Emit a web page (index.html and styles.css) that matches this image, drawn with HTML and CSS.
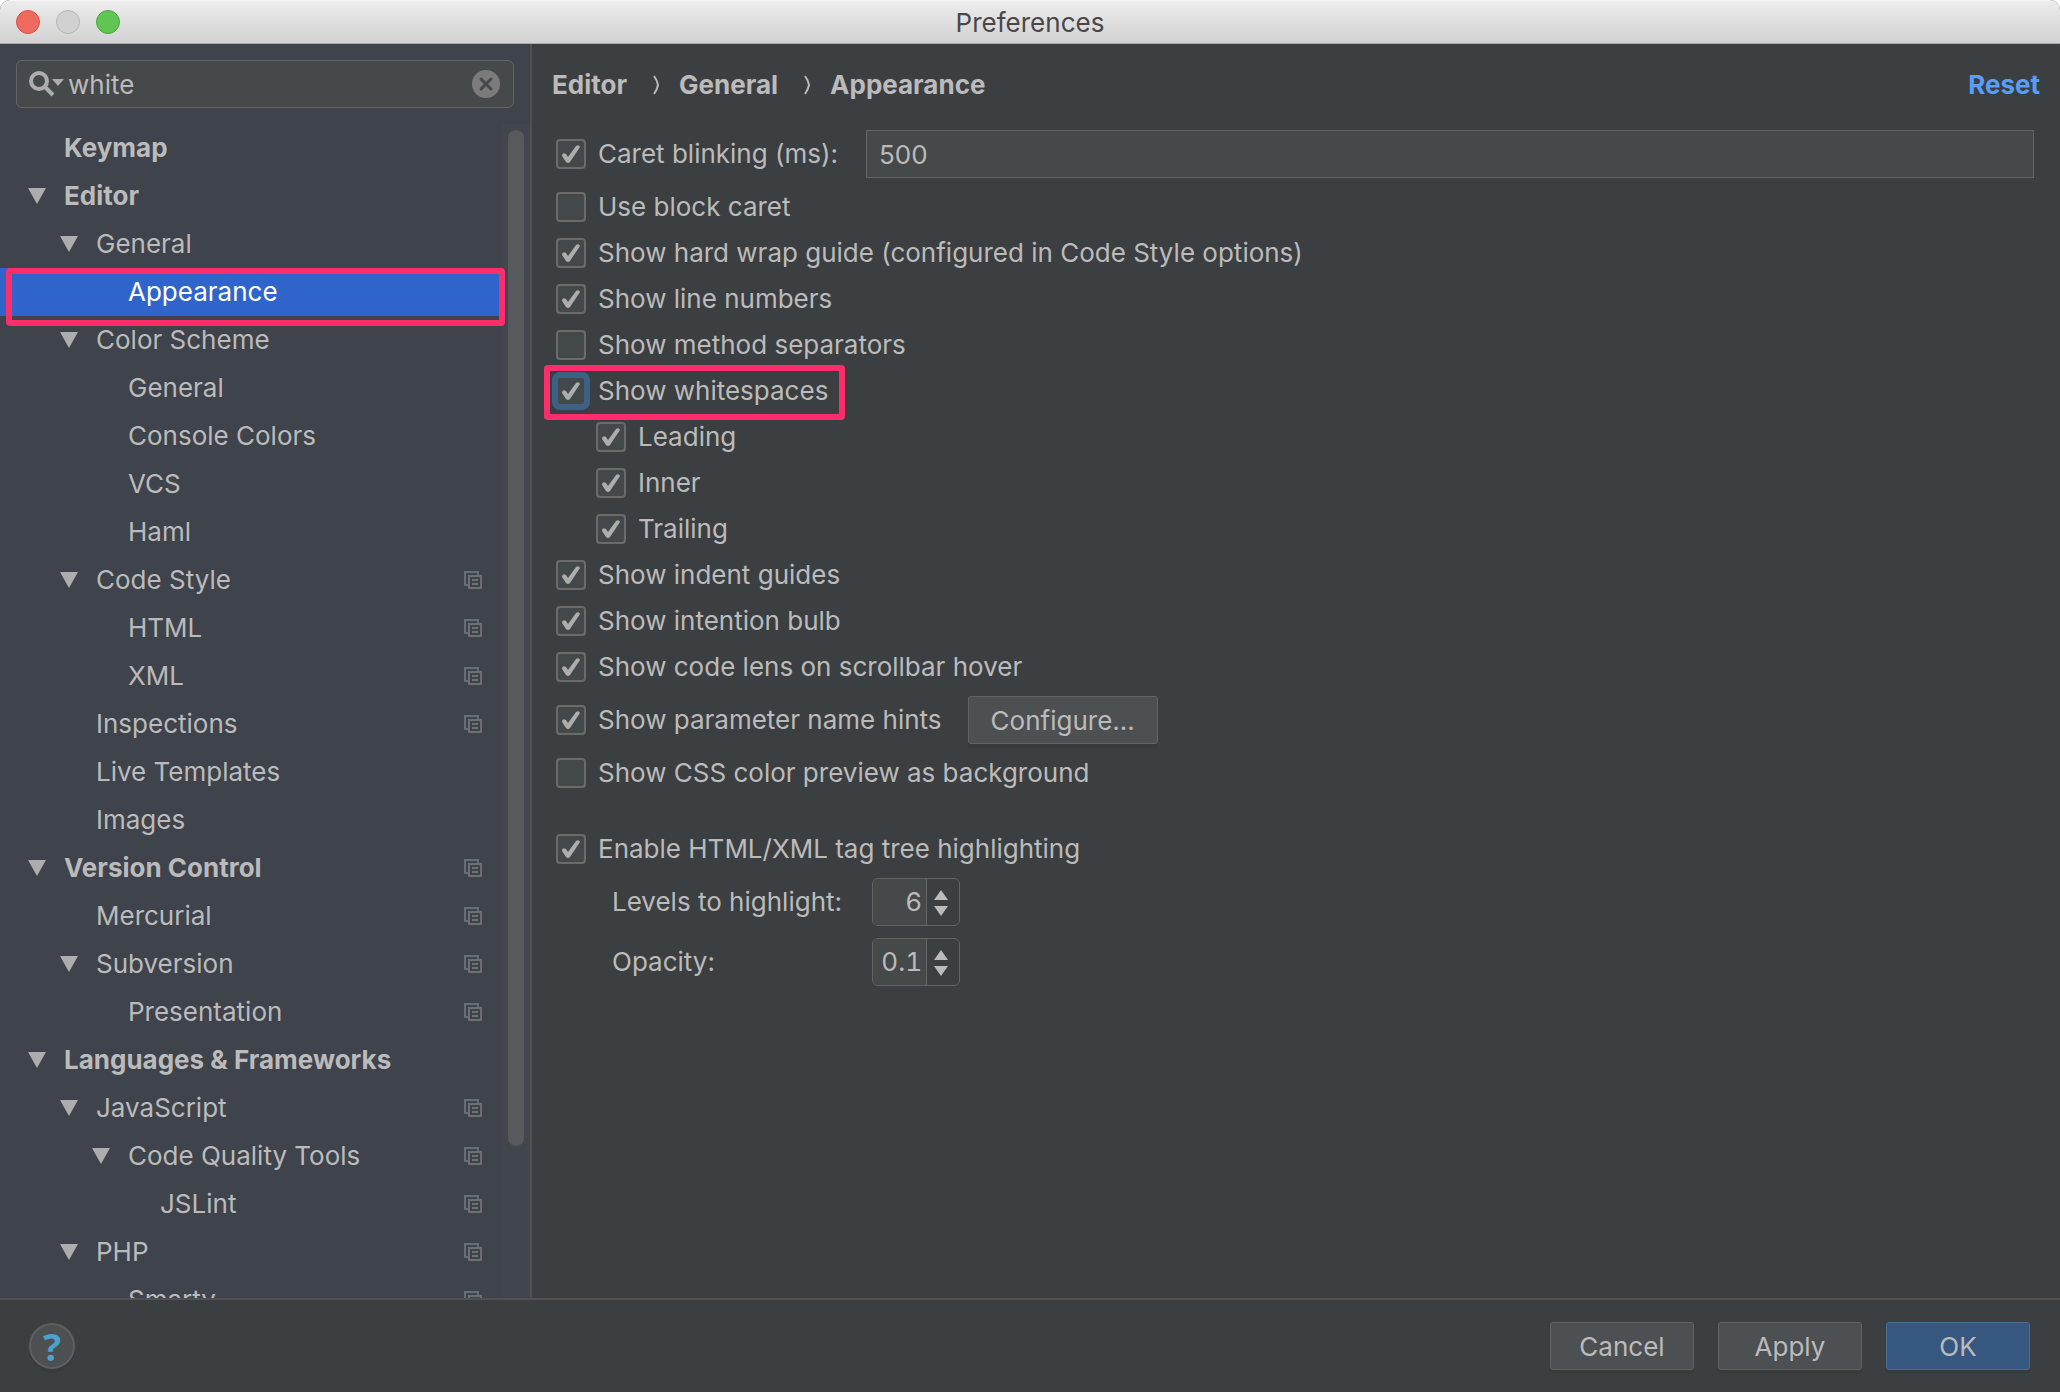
FILE: index.html
```html
<!DOCTYPE html>
<html lang="en">
<head>
  <meta charset="UTF-8" />
  <meta name="viewport" content="width=device-width, initial-scale=1.0" />
  <title>Preferences</title>
  <link rel="stylesheet" href="styles.css">
</head>
<body>
  <svg class="sprite" aria-hidden="true">
    <symbol id="arrow" viewBox="0 0 18 16"><path d="M0 0h18L9 16z" fill="#adadad"/></symbol>
    <symbol id="copy" viewBox="0 0 18 18">
      <path d="M14 4V1H1v13h3" fill="none" stroke="#60717c" stroke-width="2"/>
      <path d="M5 5h12v12H5zM8 9h6M8 13h6" fill="none" stroke="#6f6f6f" stroke-width="2"/>
    </symbol>
    <symbol id="up" viewBox="0 0 14 10"><path d="M0 10h14L7 0z" fill="#bbb"/></symbol>
    <symbol id="down" viewBox="0 0 14 10"><path d="M0 0h14L7 10z" fill="#bbb"/></symbol>
    <symbol id="chevron" viewBox="0 0 8 20"><path d="M1 1q3 4 4 9-1 5-4 9" fill="none" stroke="#bbb" stroke-width="2"/></symbol>
  </svg>

  <div class="window">
    <header class="titlebar">
      <div class="lights">
        <button class="light red" aria-label="Close"></button>
        <button class="light gray" aria-label="Minimize"></button>
        <button class="light green" aria-label="Zoom"></button>
      </div>
      <h1>Preferences</h1>
    </header>

    <div class="main">
      <aside class="sidebar">
        <div class="search">
          <svg class="search-icon" viewBox="0 0 36 28" aria-hidden="true">
            <circle cx="10" cy="11" r="8" fill="none" stroke="#adadad" stroke-width="4"/>
            <path d="M15 16l9 9" stroke="#adadad" stroke-width="4"/>
            <path d="M23 9h12l-6 7z" fill="#adadad"/>
          </svg>
          <input type="text" value="white" aria-label="Search settings">
          <button class="clear" aria-label="Clear search">
            <svg viewBox="0 0 28 28"><circle cx="14" cy="14" r="14" fill="#7b7b7b"/><path d="M9 9l10 10M19 9L9 19" stroke="#45494a" stroke-width="3" stroke-linecap="round"/></svg>
          </button>
        </div>

        <div class="tree-wrap">
          <ul class="tree">
            <li class="row top"><span>Keymap</span></li>
            <li class="row top"><svg class="arrow"><use href="#arrow"/></svg><span>Editor</span></li>
            <li class="row l1"><svg class="arrow"><use href="#arrow"/></svg><span>General</span></li>
            <li class="row l2 selected"><span>Appearance</span></li>
            <li class="row l1"><svg class="arrow"><use href="#arrow"/></svg><span>Color Scheme</span></li>
            <li class="row l2"><span>General</span></li>
            <li class="row l2"><span>Console Colors</span></li>
            <li class="row l2"><span>VCS</span></li>
            <li class="row l2"><span>Haml</span></li>
            <li class="row l1"><svg class="arrow"><use href="#arrow"/></svg><span>Code Style</span><svg class="copy"><use href="#copy"/></svg></li>
            <li class="row l2"><span>HTML</span><svg class="copy"><use href="#copy"/></svg></li>
            <li class="row l2"><span>XML</span><svg class="copy"><use href="#copy"/></svg></li>
            <li class="row l1"><span>Inspections</span><svg class="copy"><use href="#copy"/></svg></li>
            <li class="row l1"><span>Live Templates</span></li>
            <li class="row l1"><span>Images</span></li>
            <li class="row top"><svg class="arrow"><use href="#arrow"/></svg><span>Version Control</span><svg class="copy"><use href="#copy"/></svg></li>
            <li class="row l1"><span>Mercurial</span><svg class="copy"><use href="#copy"/></svg></li>
            <li class="row l1"><svg class="arrow"><use href="#arrow"/></svg><span>Subversion</span><svg class="copy"><use href="#copy"/></svg></li>
            <li class="row l2"><span>Presentation</span><svg class="copy"><use href="#copy"/></svg></li>
            <li class="row top"><svg class="arrow"><use href="#arrow"/></svg><span>Languages &amp; Frameworks</span></li>
            <li class="row l1"><svg class="arrow"><use href="#arrow"/></svg><span>JavaScript</span><svg class="copy"><use href="#copy"/></svg></li>
            <li class="row l2"><svg class="arrow"><use href="#arrow"/></svg><span>Code Quality Tools</span><svg class="copy"><use href="#copy"/></svg></li>
            <li class="row l3"><span>JSLint</span><svg class="copy"><use href="#copy"/></svg></li>
            <li class="row l1"><svg class="arrow"><use href="#arrow"/></svg><span>PHP</span><svg class="copy"><use href="#copy"/></svg></li>
            <li class="row l2"><span>Smarty</span><svg class="copy"><use href="#copy"/></svg></li>
          </ul>
          <div class="scrollbar"><div class="thumb"></div></div>
        </div>
      </aside>

      <main class="content">
        <div class="crumbs">
          <span>Editor</span>
          <svg class="chevron"><use href="#chevron"/></svg>
          <span>General</span>
          <svg class="chevron"><use href="#chevron"/></svg>
          <span>Appearance</span>
          <a class="reset" href="#">Reset</a>
        </div>

        <form class="options">
          <div class="field">
            <label class="check"><input type="checkbox" checked>Caret blinking (ms):</label>
            <input class="text" type="text" value="500" aria-label="Caret blinking (ms)">
          </div>
          <label class="check"><input type="checkbox">Use block caret</label>
          <label class="check"><input type="checkbox" checked>Show hard wrap guide (configured in Code Style options)</label>
          <label class="check"><input type="checkbox" checked>Show line numbers</label>
          <label class="check"><input type="checkbox">Show method separators</label>
          <label class="check focused"><input type="checkbox" checked>Show whitespaces</label>
          <label class="check sub"><input type="checkbox" checked>Leading</label>
          <label class="check sub"><input type="checkbox" checked>Inner</label>
          <label class="check sub"><input type="checkbox" checked>Trailing</label>
          <label class="check"><input type="checkbox" checked>Show indent guides</label>
          <label class="check"><input type="checkbox" checked>Show intention bulb</label>
          <label class="check"><input type="checkbox" checked>Show code lens on scrollbar hover</label>
          <div class="field hints">
            <label class="check"><input type="checkbox" checked>Show parameter name hints</label>
            <button type="button" class="btn">Configure...</button>
          </div>
          <label class="check"><input type="checkbox">Show CSS color preview as background</label>
          <label class="check tags"><input type="checkbox" checked>Enable HTML/XML tag tree highlighting</label>
          <div class="levels">
            <label for="levels">Levels to highlight:</label>
            <div class="spinner">
              <input id="levels" type="number" value="6">
              <div class="steps">
                <button type="button" aria-label="More levels"><svg><use href="#up"/></svg></button>
                <button type="button" aria-label="Fewer levels"><svg><use href="#down"/></svg></button>
              </div>
            </div>
            <label for="opacity">Opacity:</label>
            <div class="spinner">
              <input id="opacity" type="number" step="0.1" value="0.1">
              <div class="steps">
                <button type="button" aria-label="More opacity"><svg><use href="#up"/></svg></button>
                <button type="button" aria-label="Less opacity"><svg><use href="#down"/></svg></button>
              </div>
            </div>
          </div>
        </form>
      </main>
    </div>

    <footer class="footer">
      <button class="help" aria-label="Help">?</button>
      <button class="btn">Cancel</button>
      <button class="btn">Apply</button>
      <button class="btn primary">OK</button>
    </footer>
  </div>
</body>
</html>
```
FILE: styles.css
```css
* {
  box-sizing: border-box;
}
body {
  margin: 0;
  background: #fff;
  color: #bbb;
  font-family: Inter, Roboto, sans-serif;
  font-size: 26px;
  line-height: 32px;
}
button, input {
  font: inherit;
  color: inherit;
  margin: 0;
  padding: 0;
  border: none;
  background: none;
}
input {
  min-width: 0;
  outline: none;
}
svg {
  display: block;
  flex: none;
}
.sprite {
  position: absolute;
  width: 0;
  height: 0;
}
.window {
  display: flex;
  flex-direction: column;
  height: 100vh;
  overflow: hidden;
  border-radius: 10px 10px 0 0;
  background: #3c3f41;
}

/* title bar */
.titlebar {
  display: grid;
  grid-template-columns: 1fr auto 1fr;
  align-items: center;
  flex: none;
  height: 44px;
  padding: 0 16px;
  background: linear-gradient(#ececec, #d2d2d2);
  border-top: 1px solid #f6f6f6;
  border-bottom: 1px solid #a9abab;
}
.titlebar h1 {
  margin: 0;
  padding-top: 2px;
  color: #484848;
  font-size: 26px;
  font-weight: 400;
}
.lights {
  display: flex;
  gap: 16px;
}
.light {
  width: 24px;
  height: 24px;
  border-radius: 50%;
  border: 1px solid #b4b4b4;
  background: #d1d1d1;
}
.light.red {
  background: #ee6a5e;
  border-color: #d9534b;
}
.light.green {
  background: #61c554;
  border-color: #4aa73c;
}

.main {
  display: flex;
  flex: 1;
  min-height: 0;
}

/* sidebar */
.sidebar {
  display: flex;
  flex-direction: column;
  flex: none;
  width: 532px;
  padding-top: 16px;
  background: #3f434c;
  border-right: 2px solid #515151;
}
.search {
  display: flex;
  align-items: center;
  flex: none;
  height: 48px;
  margin: 0 16px 16px;
  padding: 0 13px 0 12px;
  background: #45494a;
  border: 1px solid #646464;
  border-radius: 6px;
}
.search-icon {
  width: 36px;
  height: 28px;
  margin-right: 3px;
}
.search input {
  flex: 1;
  padding-top: 2px;
}
.clear, .clear svg {
  width: 28px;
  height: 28px;
}
.tree-wrap {
  display: flex;
  flex: 1;
  min-height: 0;
}
.tree {
  flex: 1;
  margin: 0;
  padding: 0;
  list-style: none;
  overflow-x: visible;
  overflow-y: clip;
}
.row {
  position: relative;
  display: flex;
  align-items: center;
  height: 48px;
  padding: 0 20px 0 64px;
}
.row.top {
  font-weight: 700;
}
.row.l1 {
  padding-left: 96px;
}
.row.l2 {
  padding-left: 128px;
}
.row.l3 {
  padding-left: 160px;
}
.row.selected {
  z-index: 1;
  color: #fff;
  background: #2f65ca;
}
.row.selected::after {
  content: "";
  position: absolute;
  inset: 0 -3px -10px 6px;
  border: 6px solid #ff2d6b;
  border-radius: 4px;
}
.arrow {
  width: 18px;
  height: 16px;
  margin-left: -36px;
  margin-right: 18px;
}
.copy {
  width: 18px;
  height: 18px;
  margin-left: auto;
}
.scrollbar {
  width: 28px;
  padding: 6px 6px 0;
  background: #41454d;
}
.thumb {
  width: 16px;
  height: 87%;
  border-radius: 8px;
  background: #565a5d;
}

/* settings page */
.content {
  flex: 1;
  min-width: 0;
  padding: 24px 26px 24px 20px;
}
.crumbs {
  display: flex;
  align-items: center;
  height: 34px;
  margin-bottom: 28px;
  font-weight: 700;
}
.chevron {
  width: 8px;
  height: 20px;
  margin: 0 18px 0 26px;
}
.reset {
  margin-left: auto;
  margin-right: -6px;
  color: #589df6;
  text-decoration: none;
}
.options {
  display: flex;
  flex-direction: column;
  align-items: flex-start;
}
.field {
  display: flex;
  align-items: center;
  align-self: stretch;
  gap: 28px;
  margin-bottom: 6px;
}
.check {
  position: relative;
  display: flex;
  align-items: center;
  gap: 12px;
  height: 46px;
  padding-left: 4px;
  white-space: nowrap;
}
.check.sub {
  padding-left: 44px;
}
.check.tags {
  margin-top: 30px;
}
.check input {
  appearance: none;
  flex: none;
  width: 30px;
  height: 30px;
  background: #43494a;
  border: 2px solid #6b6b6b;
  border-radius: 4px;
}
.check input:checked::before {
  content: "";
  display: block;
  width: 26px;
  height: 26px;
  background: #adadad;
  clip-path: path("M4 15q0-4 4-2l2 3 8-11q3-2 4 1l-10 15q-2 2-4 0z");
}
.check.focused input {
  border-color: #3d6185;
  box-shadow: 0 0 0 4px #3d6185;
}
.check.focused::after {
  content: "";
  position: absolute;
  inset: -3px -17px -6px -8px;
  border: 6px solid #ff2d6b;
  border-radius: 4px;
}
.text {
  flex: 1;
  height: 48px;
  padding: 0 12px;
  background: #45494a;
  border: 1px solid #646464;
}
.btn {
  flex: none;
  min-width: 144px;
  height: 48px;
  padding: 2px 22px 0;
  background: #4c5052;
  border: 1px solid #5e6364;
  border-radius: 3px;
  box-shadow: 0 4px 0 #393a3b;
}
.btn.primary {
  background: #365880;
  border-color: #44708f;
}
.hints {
  gap: 26px;
  margin-top: 6px;
}
.levels {
  display: grid;
  grid-template-columns: 260px auto;
  align-items: center;
  row-gap: 12px;
  padding-left: 60px;
  margin-top: 6px;
}
.spinner {
  display: flex;
  width: 88px;
  height: 48px;
  border: 1px solid #646464;
  border-radius: 6px;
  overflow: hidden;
}
.spinner input {
  flex: 1;
  appearance: textfield;
  padding-right: 4px;
  text-align: right;
  font-variant-numeric: tabular-nums;
  background: #45494a;
  border-right: 1px solid #646464;
}
.spinner input::-webkit-inner-spin-button {
  appearance: none;
  margin: 0;
}
.steps {
  display: flex;
  flex-direction: column;
  justify-content: center;
  gap: 6px;
  padding: 2px 11px 0 7px;
}
.steps button, .steps svg {
  width: 14px;
  height: 10px;
}

/* bottom bar */
.footer {
  display: flex;
  align-items: center;
  flex: none;
  gap: 24px;
  height: 94px;
  padding: 0 30px 0 29px;
  border-top: 2px solid #515151;
}
.help {
  width: 46px;
  height: 46px;
  margin-right: auto;
  color: #4d9fcc;
  font-family: "Open Sans", sans-serif;
  font-size: 38px;
  font-weight: 700;
  background: #4c5052;
  border: 2px solid #5e6060;
  border-radius: 50%;
  box-shadow: 0 4px 0 #393a3b;
}
```
